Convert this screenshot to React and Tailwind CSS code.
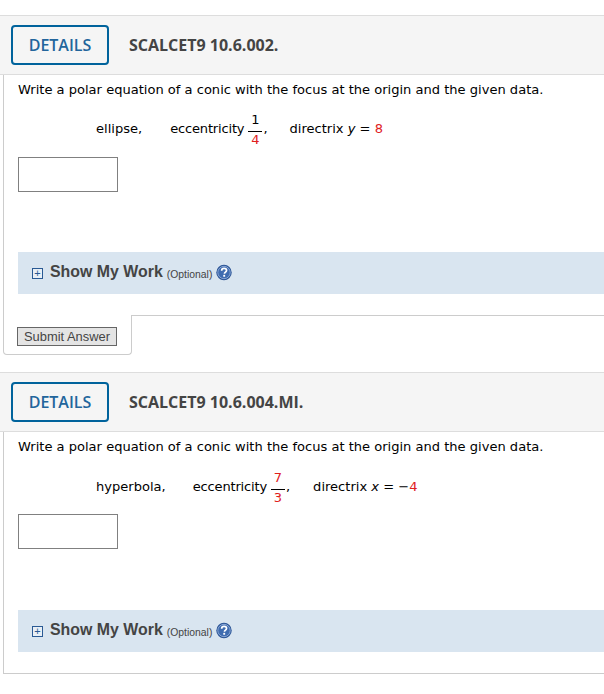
const verdana = { fontFamily: '"DejaVu Sans", sans-serif' }

function Frac({ top, bottom, topRed }) {
  return (
    <span className="ml-[4px] mr-[1px] flex w-[14px] flex-col items-center text-[13px] leading-[15px]">
      <span className={`flex h-[20px] w-full justify-center border-b border-black ${topRed ? 'text-[#e0201c]' : 'text-black'}`}>{top}</span>
      <span className="flex h-[14px] items-center text-[#e0201c]">{bottom}</span>
    </span>
  )
}

function QuestionHeader({ code }) {
  return (
    <div className="flex h-[60px] items-center border-y border-[#dddddd] bg-[#f5f5f5] pl-[11px]">
      <div className="flex h-[40px] w-[98px] items-center justify-center rounded-[4px] border-2 border-[#00639c] font-['Open_Sans'] text-base font-semibold text-[#22659c]">
        DETAILS
      </div>
      <div className="ml-[20px] font-['Open_Sans'] text-base font-bold text-[#444444]">{code}</div>
    </div>
  )
}

function HelpIcon() {
  return (
    <svg className="ml-[4px] -mt-[1px]" width="16" height="17" viewBox="0 0 17 17">
      <circle cx="8.5" cy="8.5" r="8.2" fill="#2b5596" />
      <circle cx="8.5" cy="8.5" r="6.6" fill="#3f6cb0" stroke="#8fabd8" strokeWidth="1" />
      <path d="M6 6.6c0-1.5 1.1-2.4 2.6-2.4 1.6 0 2.6.9 2.6 2.1 0 1-.6 1.5-1.3 2-.6.4-.9.7-.9 1.4" fill="none" stroke="#fff" strokeWidth="1.8" />
      <rect x="7.7" y="11" width="2" height="2" fill="#fff" />
    </svg>
  )
}

function ShowMyWork({ className }) {
  return (
    <div className={`ml-[14px] flex h-[42px] items-center bg-[#d9e5f0] pl-[14px] font-['Liberation_Sans'] text-[#444444] ${className}`}>
      <span className="flex h-[11px] w-[11px] items-center justify-center border border-[#2a5a94] bg-white/40 text-[11px] leading-none text-[#2a5a94]">+</span>
      <span className="ml-[7px] -mt-[2px] text-[15.9px] font-bold">Show My Work</span>
      <span className="ml-[4px] mt-[3px] text-[10.4px]">(Optional)</span>
      <HelpIcon />
    </div>
  )
}

function Problem({ children, rowClass, inputClass }) {
  return (
    <>
      <p className="pl-[14px] pt-[6px] text-[13.06px] leading-[18px] text-black" style={verdana}>
        Write a polar equation of a conic with the focus at the origin and the given data.
      </p>
      <div className={`flex h-[34px] items-center pl-[92px] text-[13.06px] text-black ${rowClass}`} style={verdana}>
        {children}
      </div>
      <div className={`ml-[14px] h-[35px] w-[100px] border border-[#808080] bg-white ${inputClass}`} />
    </>
  )
}

export default function App() {
  return (
    <div className="min-h-[694px] w-[604px] overflow-hidden bg-white pt-[15px]">
      <QuestionHeader code="SCALCET9 10.6.002." />
      <div className="ml-[3px] h-[240px] border-l border-[#cccccc]">
        <Problem rowClass="mt-[13px]" inputClass="mt-[11px]">
          <span>ellipse,</span>
          <span className="ml-[28px] tracking-[-0.18px]">eccentricity</span>
          <Frac top="1" bottom="4" />
          <span>,</span>
          <span className="ml-[22px]">directrix <i>y</i> = <span className="text-[#e0201c]">8</span></span>
        </Problem>
        <ShowMyWork className="mt-[60px]" />
      </div>
      <div className="flex h-[40px]">
        <div className="ml-[3px] flex h-[40px] w-[129px] items-start rounded-b-[4px] border-x border-b border-[#cccccc] pl-[13px] pt-[11px]">
          <button className="mt-[1px] flex h-[19px] w-[100px] items-center justify-center border border-[#666666] bg-[#e4e4e4] font-['Liberation_Sans'] text-[12.9px] text-[#444444]">
            Submit Answer
          </button>
        </div>
        <div className="flex-1 border-t border-[#cccccc]" />
      </div>
      <div className="mt-[17px]">
        <QuestionHeader code="SCALCET9 10.6.004.MI." />
      </div>
      <div className="ml-[3px] h-[242px] border-b border-l border-[#cccccc]">
        <Problem rowClass="mt-[14px]" inputClass="mt-[10px]">
          <span>hyperbola,</span>
          <span className="ml-[27px] tracking-[-0.18px]">eccentricity</span>
          <Frac top="7" bottom="3" topRed />
          <span>,</span>
          <span className="ml-[23px]">directrix <i>x</i> = −<span className="text-[#e0201c]">4</span></span>
        </Problem>
        <ShowMyWork className="mt-[61px]" />
      </div>
    </div>
  )
}
